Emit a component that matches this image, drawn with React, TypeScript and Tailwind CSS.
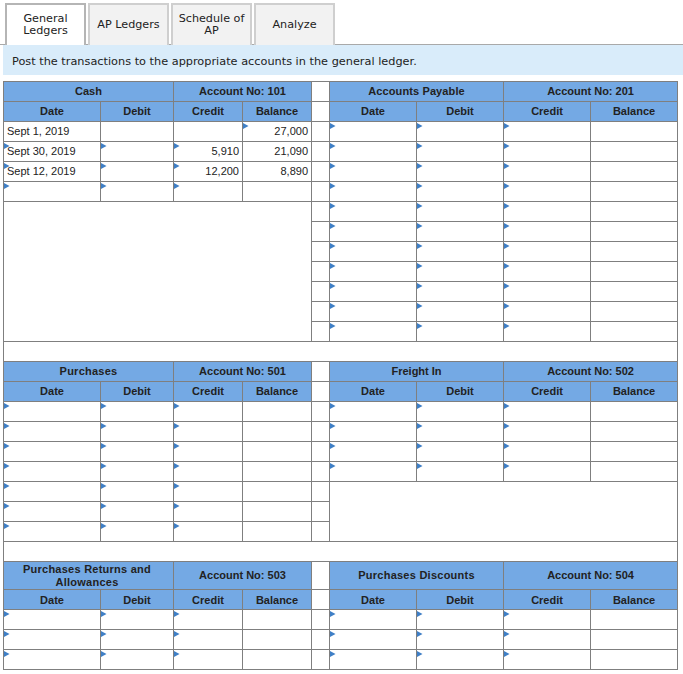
const tabs = [
  { label: 'General Ledgers', active: true },
  { label: 'AP Ledgers', active: false },
  { label: 'Schedule of AP', active: false },
  { label: 'Analyze', active: false },
];

const line = 'border border-[#7f7f7f]';

function Marker() {
  return (
    <svg className="absolute left-0 top-0 block" width="6" height="8" viewBox="0 0 6 8">
      <polygon points="0,1 5.5,4 0,7" fill="#3f7fc6" />
    </svg>
  );
}

function Cell({ text, marker, right }: { text?: string; marker?: boolean; right?: boolean }) {
  return (
    <td className={`${line} relative p-0 ${right ? 'pr-[3px] text-right' : 'pl-[3px]'}`}>
      {marker && <Marker />}
      {text}
    </td>
  );
}

function HeadCell({ text, span, extra }: { text: string; span?: number; extra?: string }) {
  return (
    <td colSpan={span} className={`${line} bg-[#74a9e4] p-0 text-center font-bold leading-[13px] text-[#222] ${extra ?? ''}`}>
      {text}
    </td>
  );
}

function Spacer() {
  return <td className={`${line} p-0`} />;
}

function BlankLedger() {
  return (
    <>
      <Cell marker />
      <Cell marker />
      <Cell marker />
      <Cell />
    </>
  );
}

function Heads({ extra }: { extra?: string }) {
  return (
    <>
      <HeadCell text="Date" extra={extra} />
      <HeadCell text="Debit" extra={extra} />
      <HeadCell text="Credit" extra={extra} />
      <HeadCell text="Balance" extra={extra} />
    </>
  );
}

function Gap() {
  return (
    <tr className="h-[20px]">
      <td colSpan={9} className={`${line} p-0`} />
    </tr>
  );
}

export default function App() {
  return (
    <div className="h-[674px] w-[683px] overflow-hidden bg-white">
      <div className="flex h-[45px] gap-[2px] border-b border-[#a9a9a9] pl-[5px] pt-[3px] font-['DejaVu_Sans',sans-serif] text-[11.2px] leading-[12px] text-[#222]">
        {tabs.map((t) => (
          <div
            key={t.label}
            className={`flex h-[42px] w-[81px] items-center justify-center border-2 border-b-0 px-1 text-center ${
              t.active ? 'relative z-10 -mb-px border-[#b5b5b5] bg-white' : 'border-[#cfcfcf] bg-[#f2f2f2]'
            }`}
          >
            {t.label}
          </div>
        ))}
      </div>
      <div className="ml-[3px] flex h-[30px] items-center bg-[#d9ecfa] pl-[9px] pt-[4px] font-['DejaVu_Sans',sans-serif] text-[11.3px] text-[#222]">
        Post the transactions to the appropriate accounts in the general ledger.
      </div>
      <table className="ml-[3px] mt-[6px] w-[674px] table-fixed border-collapse font-['Liberation_Sans',sans-serif] text-[11px] leading-[13px] text-[#222]">
        <colgroup>
          <col className="w-[97px]" />
          <col className="w-[73px]" />
          <col className="w-[69px]" />
          <col className="w-[69px]" />
          <col className="w-[18px]" />
          <col className="w-[87px]" />
          <col className="w-[87px]" />
          <col className="w-[87px]" />
          <col className="w-[87px]" />
        </colgroup>
        <tbody>
          <tr className="h-[20px]">
            <HeadCell text="Cash" span={2} />
            <HeadCell text="Account No: 101" span={2} />
            <Spacer />
            <HeadCell text="Accounts Payable" span={2} extra="tracking-[0.12px]" />
            <HeadCell text="Account No: 201" span={2} />
          </tr>
          <tr className="h-[20px]">
            <Heads />
            <Spacer />
            <Heads />
          </tr>
          <tr className="h-[20px]">
            <Cell text="Sept 1, 2019" />
            <Cell />
            <Cell />
            <Cell text="27,000" marker right />
            <Spacer />
            <BlankLedger />
          </tr>
          <tr className="h-[20px]">
            <Cell text="Sept 30, 2019" marker />
            <Cell marker />
            <Cell text="5,910" marker right />
            <Cell text="21,090" right />
            <Spacer />
            <BlankLedger />
          </tr>
          <tr className="h-[20px]">
            <Cell text="Sept 12, 2019" marker />
            <Cell marker />
            <Cell text="12,200" marker right />
            <Cell text="8,890" right />
            <Spacer />
            <BlankLedger />
          </tr>
          <tr className="h-[20px]">
            <BlankLedger />
            <Spacer />
            <BlankLedger />
          </tr>
          {[0, 1, 2, 3, 4, 5, 6].map((i) => (
            <tr key={i} className="h-[20px]">
              {i === 0 && <td colSpan={4} rowSpan={7} className={`${line} p-0`} />}
              <Spacer />
              <BlankLedger />
            </tr>
          ))}
          <Gap />
          <tr className="h-[20px]">
            <HeadCell text="Purchases" span={2} extra="tracking-[0.25px]" />
            <HeadCell text="Account No: 501" span={2} />
            <Spacer />
            <HeadCell text="Freight In" span={2} />
            <HeadCell text="Account No: 502" span={2} />
          </tr>
          <tr className="h-[20px]">
            <Heads />
            <Spacer />
            <Heads />
          </tr>
          {[0, 1, 2, 3].map((i) => (
            <tr key={i} className="h-[20px]">
              <BlankLedger />
              <Spacer />
              <BlankLedger />
            </tr>
          ))}
          {[0, 1, 2].map((i) => (
            <tr key={i} className="h-[20px]">
              <BlankLedger />
              <Spacer />
              {i === 0 && <td colSpan={4} rowSpan={3} className={`${line} p-0`} />}
            </tr>
          ))}
          <Gap />
          <tr className="h-[28px]">
            <HeadCell text="Purchases Returns and Allowances" span={2} extra="pl-[15px] pr-[18px] tracking-[0.25px]" />
            <HeadCell text="Account No: 503" span={2} />
            <Spacer />
            <HeadCell text="Purchases Discounts" span={2} extra="tracking-[0.25px]" />
            <HeadCell text="Account No: 504" span={2} />
          </tr>
          <tr className="h-[20px]">
            <Heads extra="pt-[2px]" />
            <Spacer />
            <Heads extra="pt-[2px]" />
          </tr>
          {[0, 1, 2].map((i) => (
            <tr key={i} className="h-[20px]">
              <BlankLedger />
              <Spacer />
              <BlankLedger />
            </tr>
          ))}
        </tbody>
      </table>
    </div>
  );
}
